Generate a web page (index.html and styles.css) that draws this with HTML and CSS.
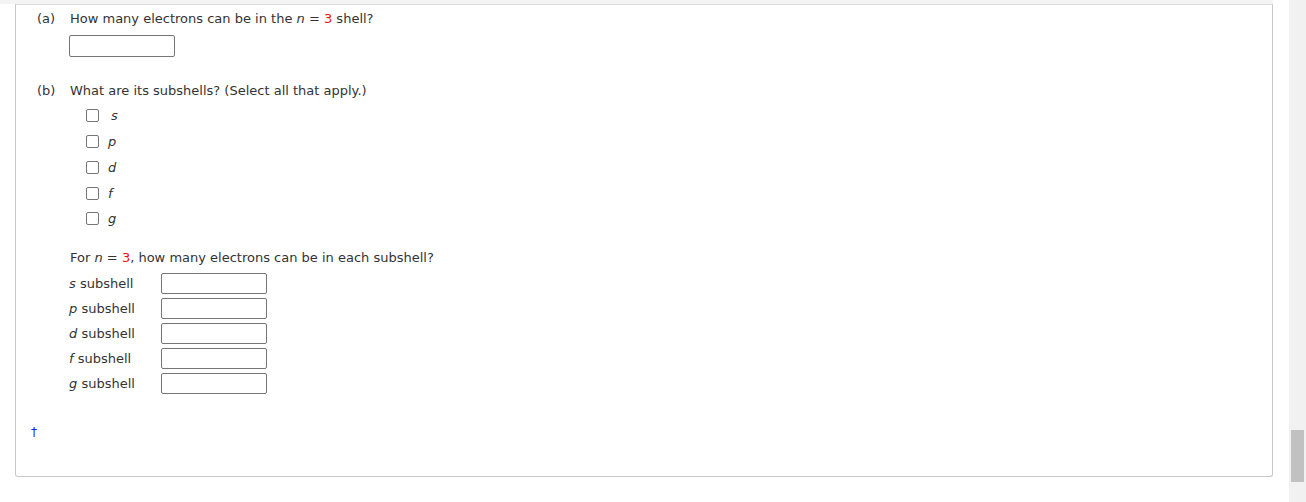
FILE: index.html
```html
<!DOCTYPE html>
<html>
<head>
<meta charset="utf-8">
<link rel="stylesheet" href="styles.css">
</head>
<body>
<div class="layout">
  <div class="main">
    <div class="topstrip"></div>
    <div class="card">
      <div class="part part-a">
        <span class="plabel">(a)</span>
        <div class="pbody">
          <div class="q">How many electrons can be in the <i>n</i> = <span class="red">3</span> shell?</div>
          <span class="box box-a"></span>
        </div>
      </div>
      <div class="part part-b">
        <span class="plabel">(b)</span>
        <div class="pbody">
          <div class="q">What are its subshells? (Select all that apply.)</div>
          <ul class="checks">
            <li><span class="cb"></span><i class="sp">s</i></li>
            <li><span class="cb"></span><i>p</i></li>
            <li><span class="cb"></span><i>d</i></li>
            <li><span class="cb"></span><i>f</i></li>
            <li><span class="cb"></span><i>g</i></li>
          </ul>
          <div class="q q2">For <i>n</i> = <span class="red">3</span>, how many electrons can be in each subshell?</div>
          <div class="subs">
            <span class="sl"><i>s</i> subshell</span><span class="box"></span>
            <span class="sl"><i>p</i> subshell</span><span class="box"></span>
            <span class="sl"><i>d</i> subshell</span><span class="box"></span>
            <span class="sl"><i>f</i> subshell</span><span class="box"></span>
            <span class="sl"><i>g</i> subshell</span><span class="box"></span>
          </div>
        </div>
      </div>
      <div class="dagger">†</div>
    </div>
  </div>
  <div class="scrollbar"><div class="thumb"></div></div>
</div>
</body>
</html>
```
FILE: styles.css
```css
html, body {
  margin: 0;
  padding: 0;
  background: #fff;
}
body {
  font-family: "DejaVu Sans", Verdana, sans-serif;
  font-size: 13px;
  color: #333;
  overflow: hidden;
}
.layout {
  display: flex;
  height: 502px;
}
.main {
  flex: 1;
}
.topstrip {
  width: 1273px;
  height: 4px;
  background: #f4f4f4;
}
.card {
  margin-left: 15px;
  width: 1256px;
  height: 471px;
  border: 1px solid #c8c8c8;
  border-top-color: #dcdcdc;
  border-radius: 0 0 3px 3px;
  padding: 0;
  box-sizing: content-box;
  position: relative;
}
.part {
  display: flex;
  padding-left: 21px;
}
.part-a {
  padding-top: 6px;
}
.part-b {
  padding-top: 26px;
}
.plabel {
  width: 33px;
  line-height: 16px;
  flex: none;
}
.pbody {
  flex: 1;
}
.q {
  line-height: 16px;
}
.red {
  color: #e8150c;
}
.box {
  display: block;
  width: 104px;
  height: 19px;
  border: 1px solid #767676;
  border-radius: 2px;
  background: #fff;
}
.box-a {
  margin-top: 8px;
  margin-left: -1px;
  height: 20px;
}
.checks {
  list-style: none;
  margin: 4px 0 0 0;
  padding: 0 0 0 16px;
}
.checks li {
  display: flex;
  align-items: center;
  height: 25.75px;
  gap: 9px;
}
.cb {
  width: 11px;
  height: 11px;
  border: 1px solid #767676;
  border-radius: 2px;
  flex: none;
}
.sp {
  margin-left: 3px;
}
.q2 {
  margin-top: 18px;
}
.subs {
  display: grid;
  grid-template-columns: 92px 106px;
  grid-auto-rows: 21px;
  row-gap: 4px;
  margin-top: 7px;
  margin-left: -1px;
  align-items: center;
}
.subs .box {
  width: 104px;
  height: 19px;
}
.dagger {
  position: absolute;
  left: 15px;
  top: 419px;
  color: #1a1aff;
  font-size: 12px;
  line-height: 16px;
}
.scrollbar {
  width: 17px;
  flex: none;
  background: #f1f1f1;
  height: 502px;
}
.thumb {
  margin: 430px 0 0 2px;
  width: 13px;
  height: 52px;
  background: #c1c1c1;
}
```
